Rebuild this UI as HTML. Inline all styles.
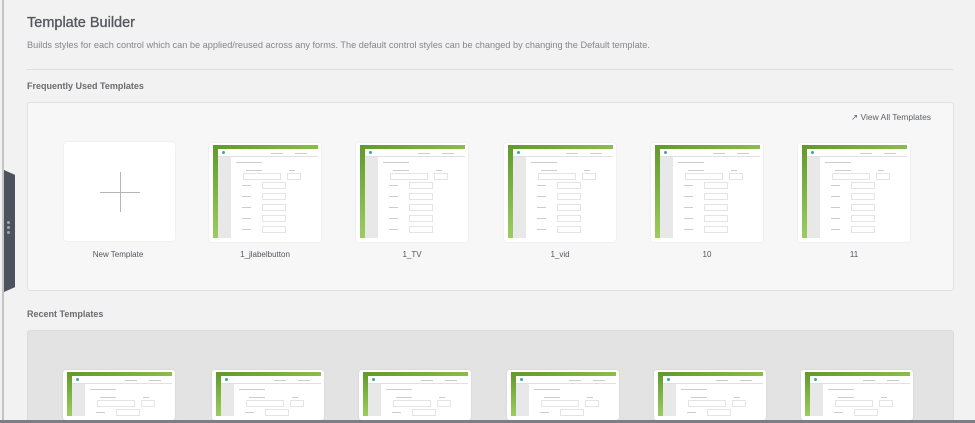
<!DOCTYPE html>
<html><head><meta charset="utf-8"><style>
*{margin:0;padding:0;box-sizing:border-box}
html,body{width:975px;height:423px;overflow:hidden}
body{background:#f2f2f2;font-family:"Liberation Sans",sans-serif}
#root{position:relative;width:975px;height:423px;overflow:hidden}
.a{position:absolute}
.t{left:27px;top:15px;font-size:14.5px;color:#55565e;-webkit-text-stroke:0.3px #55565e}
.d{left:27px;top:40px;font-size:9.2px;color:#85858a;white-space:nowrap}
.hr{left:27px;top:69px;width:926px;height:1px;background:#dedede}
.h{font-size:9px;font-weight:bold;color:#6b6b70}
.p1{left:27px;top:102px;width:927px;height:189px;background:#f7f7f7;border:1px solid #e2e2e2;border-radius:3px}
.p2{left:27px;top:330px;width:927px;height:90px;background:#e3e3e3;border:1px solid #dcdcdc;border-bottom:none;border-radius:3px 3px 0 0}
.card{width:112px;height:99px;background:#fff;border-radius:3px;box-shadow:0 0 2px rgba(0,0,0,.08);overflow:hidden}
.g1{left:4px;top:2px;right:3px;height:4px;background:linear-gradient(90deg,#5f9a2a,#8abd4c)}
.g2{left:4px;top:2px;width:5px;bottom:4px;background:linear-gradient(180deg,#5f9a2a,#9ccc60)}
.sb{left:9px;top:14px;width:13px;bottom:4px;background:#e8e8e8}
.tb{left:9px;top:13px;right:3px;height:1px;background:#e0e0e0}
.dot{left:13px;top:8px;width:3px;height:3px;border-radius:50%;background:#3aa9a0}
.ln{height:1px;background:#ccc}
.bx{width:24px;height:7px;border:1px solid #e4e4e4}
.lbl{font-size:8px;color:#55565c;text-align:center;width:112px}
</style></head><body><div id="root">
<div class="a" style="left:2px;top:0;width:2px;height:420px;background:#c4c4c4"></div>
<div class="a" style="left:4px;top:170px;width:11px;height:122px;background:#4d535e;clip-path:polygon(0 0,100% 4%,100% 96%,0 100%)"></div>
<div class="a" style="left:7px;top:221px;width:3px;height:3px;border-radius:50%;background:#9aa"></div>
<div class="a" style="left:7px;top:226px;width:3px;height:3px;border-radius:50%;background:#9aa"></div>
<div class="a" style="left:7px;top:231px;width:3px;height:3px;border-radius:50%;background:#9aa"></div>
<div class="a t">Template Builder</div>
<div class="a d">Builds styles for each control which can be applied/reused across any forms. The default control styles can be changed by changing the Default template.</div>
<div class="a hr"></div>
<div class="a h" style="left:27px;top:81px">Frequently Used Templates</div>
<div class="a p1"></div>
<div class="a" style="left:851px;top:112px;font-size:8.5px;color:#5f6068">&#x2197;&#xFE0E; View All Templates</div>
<div class="a card" style="left:64px;top:142px;width:111px"></div>
<div class="a" style="left:100px;top:192px;width:40px;height:1px;background:#b5b5b8"></div>
<div class="a" style="left:120px;top:172px;width:1px;height:40px;background:#b5b5b8"></div>
<div class="a lbl" style="left:62px;top:250px">New Template</div>
<div class="a h" style="left:27px;top:309px">Recent Templates</div>
<div class="a p2"></div>
<div id="c"></div>
<div class="a" style="left:0;top:420px;width:975px;height:3px;background:#7b7f85"></div>
</div>
<script>
function thumb(x,y,hh){
let rows='';for(let i=0;i<7;i++){const t=39+i*11;if(t+8<=hh-2)rows+=`<div class="a ln" style="left:33px;top:${t+3}px;width:${i==5?16:9}px"></div><div class="a bx" style="left:53px;top:${t}px"></div>`;}
return `<div class="a card" style="left:${x}px;top:${y}px;height:${hh}px">
<div class="a g1"></div><div class="a g2"></div><div class="a tb"></div><div class="a sb"></div><div class="a dot"></div>
<div class="a ln" style="left:62px;top:10px;width:12px"></div><div class="a ln" style="left:86px;top:10px;width:12px"></div>
<div class="a ln" style="left:27px;top:19px;width:26px"></div>
<div class="a ln" style="left:37px;top:27px;width:16px"></div><div class="a ln" style="left:80px;top:27px;width:6px"></div>
<div class="a bx" style="left:34px;top:30px;width:38px"></div><div class="a bx" style="left:78px;top:30px;width:14px"></div>
${rows}</div>`}
let h='';const xs=[213,360,508,655,802];const ls=['1_jlabelbutton','1_TV','1_vid','10','11'];
xs.forEach((x,i)=>{h+=thumb(x-4,143,99);h+=`<div class="a lbl" style="left:${x-4}px;top:250px">${ls[i]}</div>`});
[64,213,360,508,655,802].forEach(x=>{h+=thumb(x-1,370,50)});
document.getElementById('c').innerHTML=h;
</script>
</body></html>
